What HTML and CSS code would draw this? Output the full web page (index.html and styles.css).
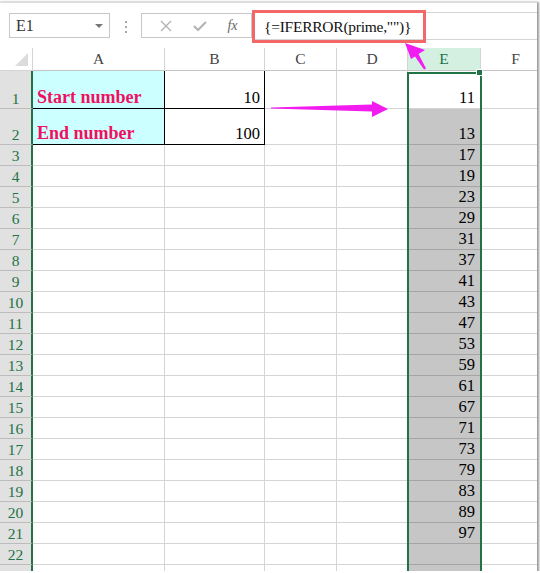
FILE: index.html
```html
<!doctype html>
<html lang="en">

<head>
    <meta charset="UTF-8" />
    <meta name="viewport" content="width=device-width, initial-scale=1.0" />
    <title>IFERROR prime</title>
    <link rel="stylesheet" href="styles.css">
</head>

<body>
    <div class="window">
        <div class="toolbar">
            <div class="namebox">
                <span>E1</span>
                <span class="caret"></span>
            </div>
            <div class="grip"><i></i><i></i><i></i></div>
            <div class="fbuttons">
                <svg width="14" height="14" viewBox="0 0 14 14"><path d="M2 2 L12 12 M12 2 L2 12" stroke="#b4b4b4" stroke-width="1.4" fill="none" /></svg>
                <svg width="16" height="14" viewBox="0 0 16 14"><path d="M2 7 L6 11 L14 3" stroke="#b4b4b4" stroke-width="2.2" fill="none" /></svg>
                <span class="fx">fx</span>
            </div>
            <div class="formula">{=IFERROR(prime,"")}</div>
        </div>

        <div class="sheet">
            <div class="corner"></div>
            <div class="ch">A</div>
            <div class="ch">B</div>
            <div class="ch">C</div>
            <div class="ch">D</div>
            <div class="ch sel">E</div>
            <div class="ch">F</div>

            <div class="rh">1</div>
            <div class="c label box">Start number</div>
            <div class="c num box">10</div>
            <div class="c"></div>
            <div class="c"></div>
            <div class="c num e first">11</div>
            <div class="c"></div>

            <div class="rh">2</div>
            <div class="c label box">End number</div>
            <div class="c num box">100</div>
            <div class="c"></div>
            <div class="c"></div>
            <div class="c num e">13</div>
            <div class="c"></div>

            <div class="rh">3</div><div class="c"></div><div class="c"></div><div class="c"></div><div class="c"></div><div class="c num e">17</div><div class="c"></div>
            <div class="rh">4</div><div class="c"></div><div class="c"></div><div class="c"></div><div class="c"></div><div class="c num e">19</div><div class="c"></div>
            <div class="rh">5</div><div class="c"></div><div class="c"></div><div class="c"></div><div class="c"></div><div class="c num e">23</div><div class="c"></div>
            <div class="rh">6</div><div class="c"></div><div class="c"></div><div class="c"></div><div class="c"></div><div class="c num e">29</div><div class="c"></div>
            <div class="rh">7</div><div class="c"></div><div class="c"></div><div class="c"></div><div class="c"></div><div class="c num e">31</div><div class="c"></div>
            <div class="rh">8</div><div class="c"></div><div class="c"></div><div class="c"></div><div class="c"></div><div class="c num e">37</div><div class="c"></div>
            <div class="rh">9</div><div class="c"></div><div class="c"></div><div class="c"></div><div class="c"></div><div class="c num e">41</div><div class="c"></div>
            <div class="rh">10</div><div class="c"></div><div class="c"></div><div class="c"></div><div class="c"></div><div class="c num e">43</div><div class="c"></div>
            <div class="rh">11</div><div class="c"></div><div class="c"></div><div class="c"></div><div class="c"></div><div class="c num e">47</div><div class="c"></div>
            <div class="rh">12</div><div class="c"></div><div class="c"></div><div class="c"></div><div class="c"></div><div class="c num e">53</div><div class="c"></div>
            <div class="rh">13</div><div class="c"></div><div class="c"></div><div class="c"></div><div class="c"></div><div class="c num e">59</div><div class="c"></div>
            <div class="rh">14</div><div class="c"></div><div class="c"></div><div class="c"></div><div class="c"></div><div class="c num e">61</div><div class="c"></div>
            <div class="rh">15</div><div class="c"></div><div class="c"></div><div class="c"></div><div class="c"></div><div class="c num e">67</div><div class="c"></div>
            <div class="rh">16</div><div class="c"></div><div class="c"></div><div class="c"></div><div class="c"></div><div class="c num e">71</div><div class="c"></div>
            <div class="rh">17</div><div class="c"></div><div class="c"></div><div class="c"></div><div class="c"></div><div class="c num e">73</div><div class="c"></div>
            <div class="rh">18</div><div class="c"></div><div class="c"></div><div class="c"></div><div class="c"></div><div class="c num e">79</div><div class="c"></div>
            <div class="rh">19</div><div class="c"></div><div class="c"></div><div class="c"></div><div class="c"></div><div class="c num e">83</div><div class="c"></div>
            <div class="rh">20</div><div class="c"></div><div class="c"></div><div class="c"></div><div class="c"></div><div class="c num e">89</div><div class="c"></div>
            <div class="rh">21</div><div class="c"></div><div class="c"></div><div class="c"></div><div class="c"></div><div class="c num e">97</div><div class="c"></div>
            <div class="rh">22</div><div class="c"></div><div class="c"></div><div class="c"></div><div class="c"></div><div class="c num e"></div><div class="c"></div>
            <div class="rh tail"></div><div class="c"></div><div class="c"></div><div class="c"></div><div class="c"></div><div class="c num e"></div><div class="c"></div>
        </div>

        <!-- overlays: selection, callout box and arrows -->
        <div class="selection"></div>
        <div class="handle"></div>
        <div class="callout"></div>
        <svg class="arrows" width="537" height="570" viewBox="0 0 537 570">
            <polygon fill="#f21cf0" points="271,107.5 372,104.5 372,101 388,109 372,117 372,111.5 271,108.5" />
            <polygon fill="#f21cf0" points="405,43 425,50 418.5,54 426,68.5 424,69.5 415,56.5 411,59" />
        </svg>
    </div>
</body>

</html>
```

FILE: styles.css
```css
body {
    margin: 0;
    background: #fff;
    font-family: "Liberation Serif", "Times New Roman", serif;
}

.window {
    position: relative;
    width: 537px;
    height: 568px;
    margin-top: 2px;
    border-top: 1px solid #dcdcdc;
    overflow: hidden;
    box-shadow: 1px 1px 2px 1px #9a9a9a;
}

.toolbar {
    display: flex;
    align-items: flex-start;
    height: 45px;
    padding-left: 9px;
    box-sizing: border-box;
}

.namebox {
    display: flex;
    align-items: center;
    justify-content: space-between;
    width: 101px;
    height: 25px;
    margin-top: 10px;
    padding: 0 6px 0 6px;
    box-sizing: border-box;
    border: 1px solid #c8c8c8;
    font-size: 16px;
    color: #333;
}

.caret {
    width: 0;
    height: 0;
    border-left: 4px solid transparent;
    border-right: 4px solid transparent;
    border-top: 4px solid #777;
}

.grip {
    display: flex;
    flex-direction: column;
    align-items: center;
    gap: 3px;
    width: 31px;
    margin-top: 18px;
}

.grip i {
    width: 2px;
    height: 2px;
    background: #a8a8a8;
}

.fbuttons {
    display: flex;
    align-items: center;
    justify-content: space-around;
    width: 111px;
    height: 25px;
    margin-top: 10px;
    padding: 0 4px 0 8px;
    box-sizing: border-box;
    border: 1px solid #c8c8c8;
}

.fx {
    font-style: italic;
    font-size: 14px;
    color: #666;
}

.formula {
    flex: 1;
    height: 28px;
    margin-top: 9px;
    padding-left: 11px;
    box-sizing: border-box;
    border: 1px solid #d4d4d4;
    border-right: none;
    font-size: 15.5px;
    letter-spacing: -0.25px;
    line-height: 27px;
    color: #111;
}

.sheet {
    display: grid;
    grid-template-columns: 33px 132px 100px 72px 71px 73px 70px;
    grid-template-rows: 23px 38px 36px repeat(21, 21px);
}

.sheet > div {
    box-sizing: border-box;
    border-right: 1px solid #d4d4d4;
    border-bottom: 1px solid #d4d4d4;
}

.corner {
    position: relative;
}

.corner::after {
    content: "";
    position: absolute;
    right: 4px;
    bottom: 4px;
    border-left: 13px solid transparent;
    border-bottom: 13px solid #dcdcdc;
}

.ch {
    display: flex;
    align-items: center;
    justify-content: center;
    font-size: 15.5px;
    color: #444;
    border-bottom-color: #c4c4c4 !important;
}

.ch.sel {
    background: #d3f0e0;
    color: #217346;
}

.rh {
    display: flex;
    align-items: flex-end;
    justify-content: center;
    background: #e1e1e1;
    font-size: 15.5px;
    color: #217346;
    border-bottom-color: #bcbcbc !important;
    border-right: 2px solid #217346 !important;
}

.c {
    display: flex;
    align-items: flex-end;
    font-size: 16.5px;
    color: #000;
    padding: 0 4px 0 4px;
}

.label {
    background: #ccffff;
    font-weight: bold;
    font-size: 18px;
    color: #f0105f;
}

.num {
    justify-content: flex-end;
}

.box {
    border-right-color: #000 !important;
    border-bottom-color: #000 !important;
}

.e {
    background: #c6c6c6;
    border-bottom-color: #a4a4a4 !important;
    padding-right: 5px;
}

.e.first {
    background: #fff;
    border-bottom-color: #d4d4d4 !important;
}

.selection {
    position: absolute;
    left: 407px;
    top: 69px;
    width: 75px;
    height: 520px;
    box-sizing: border-box;
    border: 2px solid #217346;
}

.handle {
    position: absolute;
    left: 476px;
    top: 66px;
    width: 5px;
    height: 5px;
    background: #217346;
    border: 1px solid #fff;
}

.callout {
    position: absolute;
    left: 252px;
    top: 7px;
    width: 174px;
    height: 33px;
    box-sizing: border-box;
    border: 3px solid #f26868;
}

.arrows {
    position: absolute;
    left: 0;
    top: -3px;
}
```
